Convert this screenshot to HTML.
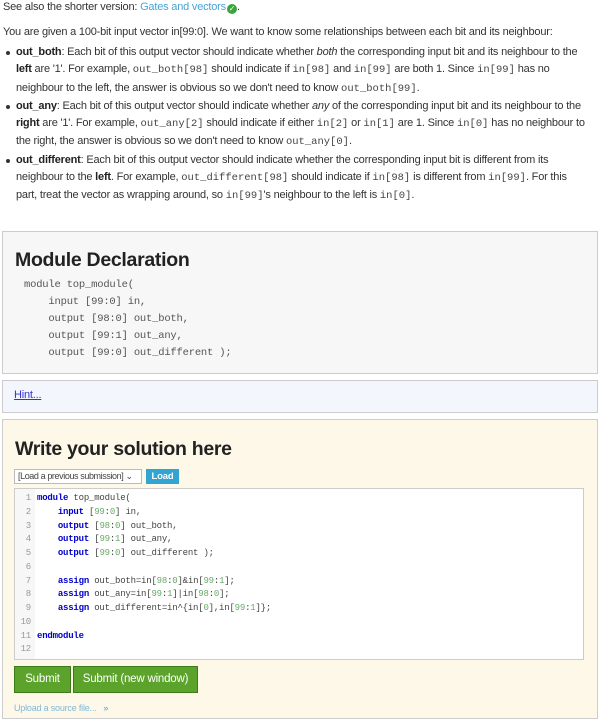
<!DOCTYPE html>
<html><head><meta charset="utf-8"><style>
*{box-sizing:border-box}
body{margin:0;width:600px;height:722px;overflow:hidden;background:#fff;font-family:"Liberation Sans",sans-serif;font-size:11px;color:#333;letter-spacing:-0.2px}
p{margin:0;position:absolute;left:3px}
a{color:#4aa3d4;text-decoration:none}
code,.m{font-family:"Liberation Mono",monospace;font-size:10.5px;color:#444;letter-spacing:0}
ul{position:absolute;left:0;top:44px;margin:0;padding-left:16px;width:590px;list-style:none}
li{line-height:17.3px;position:relative}
li:before{content:"";position:absolute;left:-10px;top:7px;width:4px;height:4px;border-radius:50%;background:#333}
b{color:#222}
.box{position:absolute;left:2px;width:596px;border:1px solid #ccc}
h2{margin:0;position:absolute;left:12px;font-size:19.5px;color:#222;font-family:"Liberation Sans",sans-serif;font-weight:bold;letter-spacing:-0.3px}
pre{margin:0;position:absolute;font-family:"Liberation Mono",monospace;font-size:10.5px;line-height:17px;color:#555}
.ed{position:absolute;left:14px;top:488px;width:570px;height:172px;border:1px solid #ccc;background:#fff}
.gut{position:absolute;left:0;top:0;width:20px;height:100%;background:#f7f7f7;text-align:right;padding-right:4px;padding-top:3px;font-family:"Liberation Mono",monospace;font-size:9px;line-height:13.75px;color:#999}
.cd{position:absolute;left:22px;top:3px;font-family:"Liberation Mono",monospace;font-size:9px;line-height:13.75px;color:#444;white-space:pre}
.k{color:#00c;font-weight:bold}.n{color:#6a6}
.btn{position:absolute;top:666px;height:27px;background:#5ba32b;border:1px solid #3d7a18;color:#fff;font-size:11.5px;line-height:25px;text-align:center}
</style></head><body>
<p style="top:0;line-height:14px">See also the shorter version: <a>Gates and vectors</a><span style="display:inline-block;width:10px;height:10px;border-radius:50%;background:#3ca43c;color:#fff;font-size:8px;line-height:10px;text-align:center;vertical-align:-1px;margin-left:1px">✓</span>.</p>
<p style="top:25px;line-height:14px">You are given a 100-bit input vector in[99:0]. We want to know some relationships between each bit and its neighbour:</p>
<ul>
<li><b>out_both</b>: Each bit of this output vector should indicate whether <i>both</i> the corresponding input bit and its neighbour to the <b>left</b> are '1'. For example, <code>out_both[98]</code> should indicate if <code>in[98]</code> and <code>in[99]</code> are both 1. Since <code>in[99]</code> has no neighbour to the left, the answer is obvious so we don't need to know <code>out_both[99]</code>.</li>
<li><b>out_any</b>: Each bit of this output vector should indicate whether <i>any</i> of the corresponding input bit and its neighbour to the <b>right</b> are '1'. For example, <code>out_any[2]</code> should indicate if either <code>in[2]</code> or <code>in[1]</code> are 1. Since <code>in[0]</code> has no neighbour to the right, the answer is obvious so we don't need to know <code>out_any[0]</code>.</li>
<li><b>out_different</b>: Each bit of this output vector should indicate whether the corresponding input bit is different from its neighbour to the <b>left</b>. For example, <code>out_different[98]</code> should indicate if <code>in[98]</code> is different from <code>in[99]</code>. For this part, treat the vector as wrapping around, so <code>in[99]</code>'s neighbour to the left is <code>in[0]</code>.</li>
</ul>
<div class="box" style="top:231px;height:143px;background:#f7f7f7">
<h2 style="top:17px">Module Declaration</h2>
<pre style="left:21px;top:45px">module top_module(
    input [99:0] in,
    output [98:0] out_both,
    output [99:1] out_any,
    output [99:0] out_different );</pre>
</div>
<div class="box" style="top:380px;height:33px;background:#f3f7fd"><a style="position:absolute;left:11px;top:8px;color:#33c;text-decoration:underline;font-size:11px">Hint...</a></div>
<div class="box" style="top:419px;height:300px;background:#fef8e8">
<h2 style="top:18px">Write your solution here</h2>
</div>
<div style="position:absolute;left:14px;top:469px;width:128px;height:15px;border:1px solid #bbb;background:#fff;font-size:9px;line-height:13px;padding-left:3px;color:#444;letter-spacing:-0.4px">[Load a previous submission] ⌄</div>
<div style="position:absolute;left:146px;top:469px;width:33px;height:15px;background:#31a4d2;color:#fff;font-size:9.5px;font-weight:bold;line-height:15px;text-align:center">Load</div>
<div class="ed"><div class="gut">1<br>2<br>3<br>4<br>5<br>6<br>7<br>8<br>9<br>10<br>11<br>12</div>
<div class="cd"><span class="k">module</span> top_module(
    <span class="k">input</span> [<span class="n">99</span>:<span class="n">0</span>] in,
    <span class="k">output</span> [<span class="n">98</span>:<span class="n">0</span>] out_both,
    <span class="k">output</span> [<span class="n">99</span>:<span class="n">1</span>] out_any,
    <span class="k">output</span> [<span class="n">99</span>:<span class="n">0</span>] out_different );

    <span class="k">assign</span> out_both=in[<span class="n">98</span>:<span class="n">0</span>]&amp;in[<span class="n">99</span>:<span class="n">1</span>];
    <span class="k">assign</span> out_any=in[<span class="n">99</span>:<span class="n">1</span>]|in[<span class="n">98</span>:<span class="n">0</span>];
    <span class="k">assign</span> out_different=in^{in[<span class="n">0</span>],in[<span class="n">99</span>:<span class="n">1</span>]};

<span class="k">endmodule</span>
</div></div>
<div class="btn" style="left:14px;width:57px">Submit</div>
<div class="btn" style="left:73px;width:125px">Submit (new window)</div>
<div style="position:absolute;left:14px;top:703px;font-size:9px;color:#7fb8d8">Upload a source file... &nbsp;&nbsp;<span style="color:#4aa3d4">»</span></div>
</body></html>
